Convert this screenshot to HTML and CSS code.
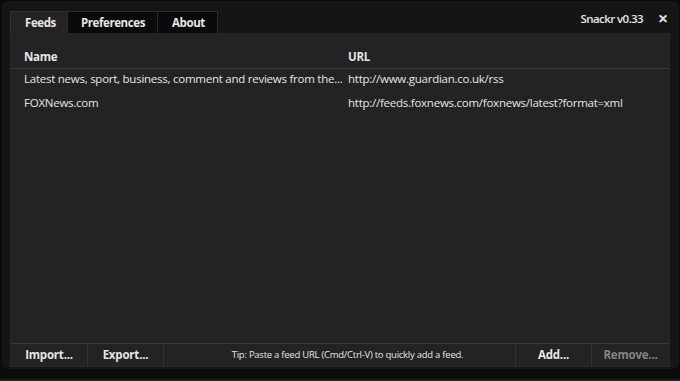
FILE: index.html
```html
<!DOCTYPE html>
<html>
<head>
    <title>Snackr</title>
    <link rel="stylesheet" href="styles.css">
</head>
<body>
    <div class="window">
        <div class="titlebar">
            <div class="tabs">
                <div class="tab active">Feeds</div>
                <div class="tab">Preferences</div>
                <div class="tab">About</div>
            </div>
            <div class="app-title">Snackr v0.33</div>
            <div class="close">&#x2715;</div>
        </div>

        <div class="panel">
            <div class="feed-table">
                <div class="row head">
                    <div class="col-name">Name</div>
                    <div class="col-url">URL</div>
                </div>
                <div class="rows">
                    <div class="row">
                        <div class="col-name">Latest news, sport, business, comment and reviews from the...</div>
                        <div class="col-url">http://www.guardian.co.uk/rss</div>
                    </div>
                    <div class="row">
                        <div class="col-name">FOXNews.com</div>
                        <div class="col-url">http://feeds.foxnews.com/foxnews/latest?format=xml</div>
                    </div>
                </div>
            </div>

            <div class="toolbar">
                <div class="tool-btn">Import...</div>
                <div class="tool-btn">Export...</div>
                <div class="tip">Tip: Paste a feed URL (Cmd/Ctrl-V) to quickly add a feed.</div>
                <div class="tool-btn">Add...</div>
                <div class="tool-btn disabled">Remove...</div>
            </div>
        </div>
    </div>
    <div class="desk-edge"></div>
</body>
</html>
```

FILE: styles.css
```css
body {
    margin: 0;
    background: #0b0b0b;
    font-family: 'Open Sans', 'DejaVu Sans', sans-serif;
    color: #e6e6e6;
    height: 381px;
    overflow: hidden;
}
.window {
    margin: 1px 1px 0 2px;
    height: 368px;
    padding: 10px 9px 2px 8px;
    background: #151515;
    border-radius: 6px;
    display: flex;
    flex-direction: column;
    box-sizing: border-box;
}
.titlebar {
    display: flex;
    align-items: flex-end;
    height: 22px;
}
.tabs {
    display: flex;
    flex: 1;
}
.tab {
    height: 22px;
    line-height: 22px;
    padding: 0 12px 0 13px;
    font-size: 11.5px;
    font-weight: bold;
    letter-spacing: -0.4px;
    background: #0a0a0a;
    border: 1px solid #2c2c2c;
    border-bottom: none;
    box-sizing: border-box;
    margin-left: -1px;
}
.tab.active {
    background: #232323;
    margin-left: 0;
    padding: 0 11px 0 14px;
    border-color: #303030;
}
.tab:last-child {
    padding: 0 12px 0 14px;
}
.app-title {
    align-self: center;
    margin-top: -8px;
    font-size: 11.5px;
    font-weight: 600;
    letter-spacing: -0.6px;
}
.close {
    align-self: center;
    margin: -8px 2px 0 15px;
    font-size: 12px;
    font-weight: bold;
    -webkit-text-stroke: 0.6px #e6e6e6;
}
.panel {
    flex: 1;
    background: #232323;
    border: 1px solid #2a2a2a;
    border-top: none;
    display: flex;
    flex-direction: column;
}
.feed-table {
    flex: 1;
}
.row {
    display: flex;
    font-size: 11.5px;
    line-height: 16px;
    padding-bottom: 8px;
    letter-spacing: -0.25px;
    white-space: nowrap;
}
.row.head {
    font-weight: bold;
    padding: 16px 0 3px;
    border-bottom: 1px solid #3c3c3c;
}
.rows {
    padding-top: 2px;
}
.col-name {
    width: 337px;
    padding-left: 13px;
    box-sizing: border-box;
    overflow: hidden;
}
.col-url {
    flex: 1;
}
.toolbar {
    display: grid;
    grid-template-columns: 77px 76px 1fr 76px 77px;
    height: 22px;
    border-top: 1px solid #383838;
    align-items: center;
}
.tool-btn {
    text-align: center;
    font-size: 11.5px;
    font-weight: bold;
    letter-spacing: -0.2px;
    line-height: 22px;
    border-right: 1px solid #333;
}
.tool-btn:last-child {
    border-right: none;
}
.tool-btn.disabled {
    color: #858585;
}
.tip {
    text-align: center;
    font-size: 9.5px;
    letter-spacing: -0.25px;
    line-height: 22px;
    padding-left: 16px;
    border-right: 1px solid #333;
}
.desk-edge {
    height: 12px;
    background: linear-gradient(#0b0b0b 0, #0b0b0b 9px, #1c2212 11px, #25301a 12px);
}
```
